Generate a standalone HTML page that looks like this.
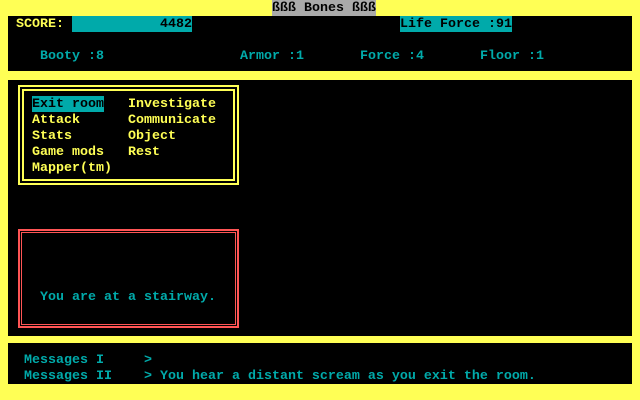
<!DOCTYPE html>
<html><head><style>
body{margin:0;width:640px;height:400px;background:#ffff55;position:relative;overflow:hidden;font-family:"Liberation Mono",monospace;font-size:13.33px;line-height:16px;font-weight:bold}
.a{position:absolute;white-space:pre}
.t{padding-top:1px;box-sizing:border-box}
.blk{position:absolute;background:#000}
.c{color:#00aaaa}.y{color:#ffff55}
</style></head><body>
<div class="a t" style="left:272px;top:0;width:104px;height:16px;background:#aaaaaa;color:#000">ßßß Bones ßßß</div>
<div class="blk" style="left:8px;top:16px;width:624px;height:55px"></div>
<div class="blk" style="left:8px;top:80px;width:624px;height:256px"></div>
<div class="blk" style="left:8px;top:343px;width:624px;height:41px"></div>
<div class="a y t" style="left:16px;top:16px">SCORE:</div>
<div class="a t" style="left:72px;top:16px;width:120px;height:16px;background:#00aaaa;color:#000;text-align:right">4482</div>
<div class="a t" style="left:400px;top:16px;width:112px;height:16px;background:#00aaaa;color:#000">Life Force :91</div>
<div class="a c t" style="left:40px;top:48px">Booty :8</div>
<div class="a c t" style="left:240px;top:48px">Armor :1</div>
<div class="a c t" style="left:360px;top:48px">Force :4</div>
<div class="a c t" style="left:480px;top:48px">Floor :1</div>
<div class="a" style="left:18px;top:85px;width:217px;height:96px;border:2px solid #ffff55"></div>
<div class="a" style="left:22px;top:89px;width:209px;height:88px;border:2px solid #ffff55"></div>
<div class="a t" style="left:32px;top:96px;width:72px;height:16px;background:#00aaaa;color:#000">Exit room</div>
<div class="a y t" style="left:32px;top:112px">Attack
Stats
Game mods
Mapper(tm)</div>
<div class="a y t" style="left:128px;top:96px">Investigate
Communicate
Object
Rest</div>
<div class="a" style="left:18px;top:229px;width:217px;height:95px;border:2px solid #ff5555"></div>
<div class="a" style="left:21px;top:232px;width:213px;height:91px;border:1px solid #ff5555"></div>
<div class="a c t" style="left:40px;top:289px">You are at a stairway.</div>
<div class="a c t" style="left:24px;top:352px">Messages I     &gt;
Messages II    &gt; You hear a distant scream as you exit the room.</div>
</body></html>
